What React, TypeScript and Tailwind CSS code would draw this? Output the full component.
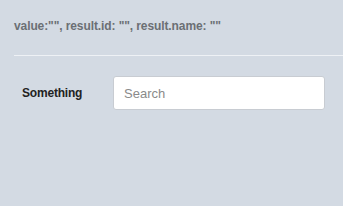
export default function App() {
  return (
    <div className="min-h-screen bg-[#d3dae3] pl-[14px] pt-[19px]" style={{ fontFamily: '"Liberation Sans", Arial, sans-serif' }}>
      <div className="text-[12px] leading-[14px] font-bold text-[#6b6f74] tracking-[-0.1px]">
        value:"", result.id: "", result.name: ""
      </div>
      <div className="mt-[22px] h-px bg-[#eef1f5]" />
      <div className="mt-[20px] flex items-center pl-[8px]">
        <label className="w-[91px] text-[12px] font-bold text-[#222] tracking-[-0.2px]">Something</label>
        <input
          type="text"
          placeholder="Search"
          className="h-[34px] w-[212px] rounded-[3px] border border-[#c8ccd2] bg-white px-[10px] text-[13px] text-[#333] placeholder:text-[#8a8a8a] outline-none"
        />
      </div>
    </div>
  );
}
